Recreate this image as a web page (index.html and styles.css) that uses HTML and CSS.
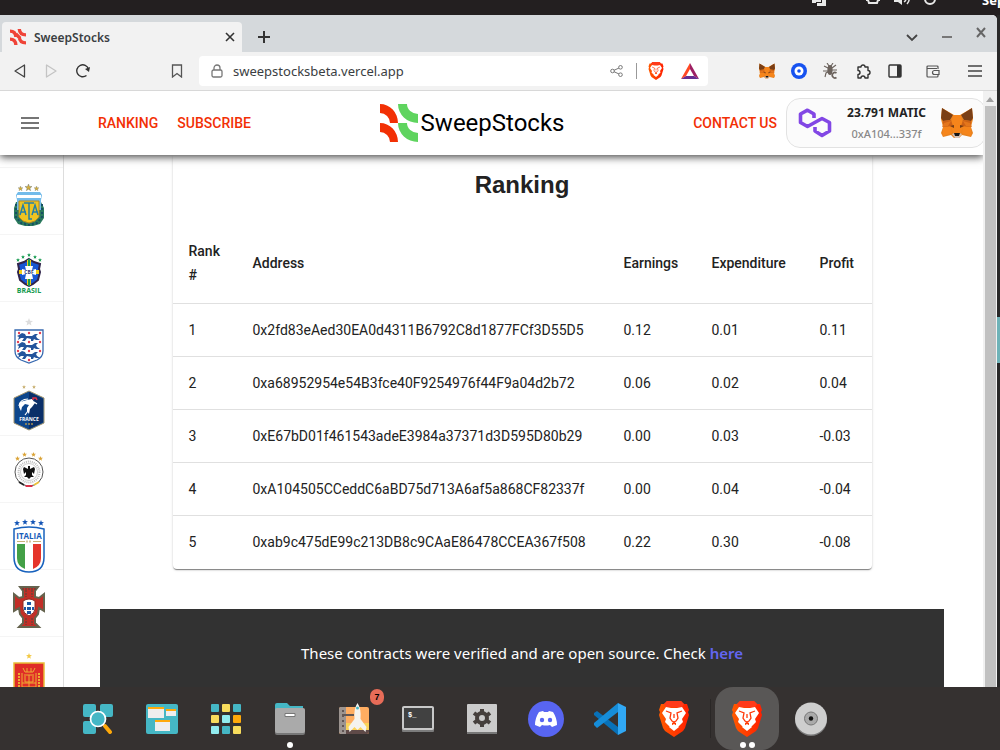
FILE: index.html
```
<!DOCTYPE html>
<html lang="en">

<head>
  <meta charset="UTF-8">
  <meta name="viewport" content="width=device-width, initial-scale=1.0">
  <title>SweepStocks</title>
  <link rel="stylesheet" href="styles.css">
</head>

<body>
  <!-- shared icons -->
  <svg class="defs" aria-hidden="true">
    <defs>
      <linearGradient id="brave-fill" x1="0" x2="1" y1="0" y2="0">
        <stop offset="0" stop-color="#ff5a00"/>
        <stop offset="1" stop-color="#ff1f00"/>
      </linearGradient>
      <symbol id="brave" viewBox="0 0 30 36">
        <path fill="url(#brave-fill)" d="M8 0h14l3 3h3l2 6-1 2 1 3-4 13-2 3-9 6-9-6-2-3L0 14l1-3-1-2 2-6h3z"/>
        <path fill="#ff3a1a" d="M8 0h14l3 3-2 3H7L5 3z"/>
        <path fill="#fff" d="M15 7l-3 0-5-1-4 6 4 6-1 3 5 5 2-1 0-3 2-1 2 1 0 3 2 1 5-5-1-3 4-6-4-6-5 1zM15 23l-5 3 5 4 5-4z"/>
        <path fill="none" stroke="#ff3a0a" stroke-width="1.3" d="M7 10l5 2-1 5 2 3 2 1 2-1 2-3-1-5 5-2M15 13v4M15 21v2"/>
      </symbol>
      <symbol id="fox" viewBox="0 0 32 30">
        <path fill="#e8821e" d="M1 0l12 7h6l12-7 1 11-2 8 2 6-2 4-9-2-3 3h-5l-3-3-8 2-2-4 2-6-2-8z"/>
        <path fill="#7a3f16" d="M1 0l11 7-3 5-7 1-2-3zM31 0L20 7l3 5 7 1 2-3z"/>
        <path fill="#f6851b" d="M12 7h8l2 11-2 7h-8l-2-7zM2 19l8-1 1 7-9 3zM30 19l-8-1-1 7 9 3z"/>
        <path fill="#cd6116" d="M2 13l8-1 2 6-10 1zM30 13l-8-1-2 6 10 1z"/>
        <path fill="#e4761b" d="M3 15l7-2-3 5-6 1zM29 15l-7-2 3 5 6 1z"/>
        <path fill="#763d16" d="M9 18l4-1 0 3zM23 18l-4-1 0 3z"/>
        <path fill="#d7c1b3" d="M11 26l3-1h4l3 1-3 4h-4z"/>
        <path fill="#161616" d="M13 25h6l-1 3h-4z"/>
      </symbol>
      <symbol id="star" viewBox="0 0 10 10">
        <path d="M5 0l1.3 3.4 3.7.2-2.9 2.3 1 3.6L5 7.5 1.9 9.5l1-3.6L0 3.6l3.7-.2z"/>
      </symbol>
      <symbol id="lion" viewBox="0 0 24 8">
        <path fill="#24549c" d="M2 2l3-2 3 1 1 2h6l3-2 3 0-2 2 1 2 3 2h-4l-2-1-1 2h-2v-2l-4-1-2 3H5l2-3-3 0-3 2 1-3-2-1z"/>
      </symbol>
    </defs>
  </svg>

  <div class="desktop">
    <div class="system-bar">
      <svg width="14" height="15" viewBox="0 0 14 15"><path fill="#e8e8e8" d="M0-2h9V2H4v1H0zM10-1h4v7H5V3h5z"/></svg>
      <svg class="tray-second" width="14" height="15" viewBox="0 0 14 15"><path fill="none" stroke="#e8e8e8" stroke-width="2" d="M0 0h2l1 3h8l1-3h2"/></svg>
      <svg width="16" height="15" viewBox="0 0 16 15"><path fill="#e8e8e8" d="M0-4h4l4-3V5L4 2H0z"/><path fill="none" stroke="#e8e8e8" stroke-width="1.5" d="M10 2q3-2 2-6M13 4q3-3 2-8"/></svg>
      <svg width="12" height="15" viewBox="0 0 12 15"><circle cx="6" cy="-1" r="5" fill="none" stroke="#e8e8e8" stroke-width="2"/></svg>
      <span class="clock">Sep</span>
    </div>

    <div class="workspace">
      <div class="browser">
        <div class="tab-strip">
          <div class="tab">
            <svg width="16" height="16" viewBox="0 0 38 38">
              <g fill="none" stroke="#ef4438" stroke-width="8">
                <path d="M0 5q13 0 14 14M0 24q13 0 14 14M22 0q1 14 16 14M22 19q1 14 16 14M14 12l10 10"/>
              </g>
            </svg>
            <span class="tab-title">SweepStocks</span>
            <button class="icon-button" aria-label="Close tab">
              <svg width="10" height="10" viewBox="0 0 10 10"><path stroke="#333" stroke-width="1.6" d="M1 1l8 8M9 1L1 9"/></svg>
            </button>
          </div>
          <button class="icon-button new-tab" aria-label="New tab">
            <svg width="12" height="12" viewBox="0 0 12 12"><path stroke="#333" stroke-width="2" d="M6 0v12M0 6h12"/></svg>
          </button>
          <div class="window-buttons">
            <button class="icon-button" aria-label="Search tabs">
              <svg width="12" height="12" viewBox="0 0 12 12"><path fill="none" stroke="#444" stroke-width="1.8" d="M1 4l5 5 5-5"/></svg>
            </button>
            <button class="icon-button" aria-label="Minimize">
              <svg width="10" height="12" viewBox="0 0 10 12"><path stroke="#777" stroke-width="2" d="M0 6h10"/></svg>
            </button>
            <button class="icon-button window-close" aria-label="Close window">
              <svg width="10" height="12" viewBox="0 0 10 12"><path stroke="#666" stroke-width="2" d="M1 1l8 9M9 1L1 10"/></svg>
            </button>
          </div>
        </div>

        <div class="toolbar">
          <div class="history-buttons">
            <button class="icon-button" aria-label="Back">
              <svg width="12" height="14" viewBox="0 0 12 14"><path fill="none" stroke="#444" stroke-width="1.3" stroke-linejoin="round" d="M10.500 1v12L1 7z"/></svg>
            </button>
            <button class="icon-button" aria-label="Forward" disabled>
              <svg width="12" height="14" viewBox="0 0 12 14"><path fill="none" stroke="#c4c4c4" stroke-width="1.3" stroke-linejoin="round" d="M1.500 1v12L11 7z"/></svg>
            </button>
            <button class="icon-button" aria-label="Reload">
              <svg width="14" height="14" viewBox="0 0 14 14"><path fill="none" stroke="#333" stroke-width="1.4" d="M10.500 11.500A6 6 0 1 1 12.500 5"/><path fill="#333" d="M9 5l5-2-1 5z"/></svg>
            </button>
          </div>
          <button class="icon-button bookmark" aria-label="Bookmark">
            <svg width="12" height="14" viewBox="0 0 12 14"><path fill="none" stroke="#555" stroke-width="1.3" d="M1.500 1h9v12L6 9.500 1.500 13z"/></svg>
          </button>
          <div class="address-bar">
            <svg width="12" height="14" viewBox="0 0 12 14"><g fill="none" stroke="#777" stroke-width="1.3"><rect x="1" y="6" width="10" height="7" rx="1.500"/><path d="M3 6V4a3 3 0 0 1 6 0v2"/></g></svg>
            <input class="address-input" type="text" aria-label="Address" value="sweepstocksbeta.vercel.app">
            <svg width="13" height="12" viewBox="0 0 13 12"><g fill="none" stroke="#777"><circle cx="2.500" cy="6" r="1.800"/><circle cx="10.500" cy="2.300" r="1.800"/><circle cx="10.500" cy="9.700" r="1.800"/><path d="M4 5.300l5-2.300M4 6.700l5 2.300"/></g></svg>
            <span class="divider"></span>
            <svg class="shield" width="16" height="18"><use href="#brave"/></svg>
            <svg width="18" height="16" viewBox="0 0 18 16">
              <path fill="#ff4724" d="M9 0L0 16l5-3 4-7z"/><path fill="#9e1f63" d="M9 0l9 16-5-3-4-7z"/><path fill="#662d91" d="M0 16h18l-5-3H5z"/>
            </svg>
          </div>
          <div class="extensions">
            <svg width="16" height="16"><use href="#fox"/></svg>
            <svg width="16" height="16" viewBox="0 0 16 16"><circle cx="8" cy="8" r="8" fill="#1652f0"/><circle cx="8" cy="8" r="4.500" fill="#fff"/><circle cx="8" cy="8" r="1.800" fill="#1652f0"/></svg>
            <svg width="16" height="16" viewBox="0 0 16 16"><ellipse cx="7" cy="7" rx="2.600" ry="5" fill="#6b625c"/><path fill="none" stroke="#6b625c" stroke-width="1.100" d="M4 0l2 3M10 0L8 3M1 3l4 2M13 2L9 5M0 8h5M9 7h5M2 14l1-4 2-1"/><path fill="none" stroke="#6b625c" stroke-width="1.700" d="M13.500 10a2.700 2.700 0 1 0 0 4.500"/></svg>
            <svg width="16" height="15" viewBox="0 0 16 15"><path fill="none" stroke="#333" stroke-width="1.400" stroke-linejoin="round" d="M3 3h3a2 2 0 0 1 4 0h3v3.500a2 2 0 0 1 0 4V14h-3a2 2 0 0 0-4 0H3v-3.500a2 2 0 0 0 0-4z"/></svg>
            <svg width="16" height="14" viewBox="0 0 16 14"><rect x="2" y="1" width="12" height="12" rx="1" fill="none" stroke="#333" stroke-width="1.400"/><path fill="#333" d="M10 1h4v12h-4z"/></svg>
          </div>
          <svg width="14" height="13" viewBox="0 0 14 13"><g fill="none" stroke="#555" stroke-width="1.200"><path d="M12 4V2q0-1-1-1H2Q1 1 1 2v9q0 1 1 1h9q1 0 1-1V9.500M1 3.500h10M13 5.500H8.500a1.500 1.500 0 0 0 0 4H13z"/></g></svg>
          <button class="icon-button browser-menu" aria-label="Browser menu">
            <svg width="14" height="12" viewBox="0 0 14 12"><path stroke="#444" stroke-width="1.400" d="M0 1h14M0 6h14M0 11h14"/></svg>
          </button>
        </div>

        <div class="viewport">
          <div class="page">
            <header class="app-bar">
              <button class="icon-button menu" aria-label="Open menu">
                <svg width="18" height="12" viewBox="0 0 18 12"><path fill="#757575" d="M0 0h18v2H0zM0 5h18v2H0zM0 10h18v2H0z"/></svg>
              </button>
              <nav class="nav-links">
                <a href="#ranking">Ranking</a>
                <a href="#subscribe">Subscribe</a>
              </nav>
              <a class="brand" href="#home">
                <svg width="38" height="38" viewBox="0 0 38 38">
                  <path fill="#f23005" d="M0 0a18 19 0 0 1 18 19H10A10 10 0 0 0 0 9zM0 19a18 19 0 0 1 18 19H10A10 10 0 0 0 0 28z"/>
                  <path fill="#5fd45f" d="M18 0h9a11 10 0 0 0 11 10v9A20 19 0 0 1 18 0zM18 19h9a11 10 0 0 0 11 10v9A20 19 0 0 1 18 19z"/>
                </svg>
                <span>SweepStocks</span>
              </a>
              <nav class="nav-links">
                <a href="#contact">Contact us</a>
              </nav>
              <div class="wallet">
                <svg width="34" height="30" viewBox="0 0 34 30">
                  <path fill="none" stroke="#8247e5" stroke-width="3.600" stroke-linejoin="round" d="M16 10V6L9.500 2.200 2.500 6v8.500l7 4L24 10.500l7.500 4V23L24 27.500 17 23v-4"/>
                </svg>
                <div class="wallet-info">
                  <strong>23.791 MATIC</strong>
                  <span>0xA104...337f</span>
                </div>
                <svg width="32" height="30"><use href="#fox"/></svg>
              </div>
            </header>

            <div class="page-body">
              <aside class="sidebar">
                <a class="team" href="#argentina" aria-label="Argentina">
                  <svg width="32" height="44" viewBox="0 0 32 44">
                    <g fill="#d3ad3c" stroke="#50626b" stroke-width=".5"><use href="#star" x="5" y="2" width="5" height="5"/><use href="#star" x="12" y="0" width="7" height="7"/><use href="#star" x="21" y="2" width="5" height="5"/></g>
                    <path fill="#2b7a5c" d="M3 18l-2 6 0 10 4 6 7 2h8l7-2 4-6V24l-3-6z"/>
                    <path fill="none" stroke="#174f63" stroke-dasharray="2 2" stroke-width="2" d="M3 20v13l5 6 8 2 8-2 5-6V20"/>
                    <path fill="#72bbea" d="M5 8l22 0 2 3-1 5v10H4V16l-1-5z"/><path fill="#fff" d="M4 11h24v3H4z"/>
                    <path fill="#efc420" stroke="#b18823" d="M6 17h20v16l-4 4-6 2-6-2-4-4z"/>
                    <path fill="none" stroke="#2480a5" stroke-width="1.500" d="M7 31l3-10 3 10M8 28h5M11 19h10M16 19v16h3M19 31l3-10 3 10M20 28h5"/>
                  </svg>
                </a>
                <a class="team" href="#brazil" aria-label="Brazil">
                  <svg width="32" height="44" viewBox="0 0 32 44">
                    <g fill="#169b50"><use href="#star" x="3" y="7" width="4" height="4"/><use href="#star" x="8" y="4" width="4" height="4"/><use href="#star" x="14" y="2" width="4" height="4"/><use href="#star" x="20" y="4" width="4" height="4"/><use href="#star" x="25" y="7" width="4" height="4"/></g>
                    <path fill="#1857d3" stroke="#30244b" stroke-width="2" d="M16 8l5 3 6 2-1 5 1 3-2 8-5 4-4 2-4-2-5-4-2-8 1-3-1-5 6-2z"/>
                    <path fill="#f2cf18" d="M14 9h4v25h-4zM6 19h20v4H6z"/><path fill="#169b50" d="M15 8h2v27h-2z"/>
                    <path fill="#fff" d="M12 15h8l-1 4 4-1v6l-4-1 1 5h-8l1-5-4 1v-6l4 1z"/>
                    <text x="16" y="23" class="crest-text" font-size="5" fill="#283576">CBF</text>
                    <text x="16" y="42" class="crest-text" font-size="7" fill="#169b50">BRASIL</text>
                  </svg>
                </a>
                <a class="team" href="#england" aria-label="England">
                  <svg width="32" height="46" viewBox="0 0 32 46">
                    <use href="#star" x="12" y="0" width="8" height="8" fill="#ddd"/>
                    <path fill="#fff" stroke="#3769b0" stroke-width="1.300" d="M2 12h28v21q0 6-6 9l-8 3-8-3q-6-3-6-9z"/>
                    <use href="#lion" x="4" y="15" width="24" height="8"/><use href="#lion" x="4" y="24" width="24" height="8"/><use href="#lion" x="4" y="33" width="24" height="8"/>
                    <g fill="#e63e50"><circle cx="6" cy="15" r="1.200"/><circle cx="16" cy="15" r="1.200"/><circle cx="27" cy="15" r="1.200"/><circle cx="5" cy="24" r="1.200"/><circle cx="16" cy="24" r="1.200"/><circle cx="27" cy="24" r="1.200"/><circle cx="5" cy="33" r="1.200"/><circle cx="16" cy="33" r="1.200"/><circle cx="27" cy="33" r="1.200"/><circle cx="16" cy="42" r="1.200"/></g>
                  </svg>
                </a>
                <a class="team" href="#france" aria-label="France">
                  <svg width="32" height="46" viewBox="0 0 32 46">
                    <g fill="#c9b071"><use href="#star" x="9" y="0" width="4" height="4"/><use href="#star" x="19" y="0" width="4" height="4"/></g>
                    <path fill="#0d468c" stroke="#a4946d" d="M16 6l15 7v25l-15 7-15-7V13z"/><path fill="#0b2f68" d="M16 7l14 7v23l-14 7z"/>
                    <path fill="#fff" d="M14 15l5-1 3 4-3 4-2 2-1 5-2-3 0-3 2-3-4-1-3 3-1 4-2-4 1-5z"/>
                    <path fill="none" stroke="#fff" stroke-width="1.200" d="M6 21q1-7 9-7M12 30l3-4M21 17l3 2"/>
                    <path fill="none" stroke="#dd3348" stroke-width="1.500" d="M20 15l0-2 3 0 1 2"/>
                    <text x="16" y="36" class="crest-text" font-size="5" fill="#fff">FRANCE</text>
                    <path stroke="#a99251" stroke-width="1.500" stroke-dasharray="2 1" d="M12 39h8"/>
                  </svg>
                </a>
                <a class="team" href="#germany" aria-label="Germany">
                  <svg width="32" height="36" viewBox="0 0 32 36">
                    <g fill="#dba437"><use href="#star" x="2" y="4" width="5" height="5"/><use href="#star" x="9" y="0" width="5" height="5"/><use href="#star" x="18" y="0" width="5" height="5"/><use href="#star" x="25" y="4" width="5" height="5"/></g>
                    <circle cx="16" cy="20" r="14" fill="#fff" stroke="#555"/>
                    <circle cx="16" cy="20" r="10.500" fill="none" stroke="#bbb" stroke-width="2" stroke-dasharray="1 1"/><circle cx="16" cy="20" r="8.500" fill="#fff" stroke="#999" stroke-width=".5"/>
                    <path fill="#111" d="M15 14h2v3l4-2 1 2-1 5-2-2 0 3 2 2-3 0-2 2-2-2-3 0 2-2 0-3-2 2-1-5 1-2 4 2z"/>
                    <path fill="none" stroke="#222" stroke-width="2" d="M6 30l5 3"/><path fill="none" stroke="#dc3048" stroke-width="2" d="M12.500 34h7"/><path fill="none" stroke="#edc33c" stroke-width="2" d="M21 33l5-3"/>
                  </svg>
                </a>
                <a class="team" href="#italy" aria-label="Italy">
                  <svg width="32" height="54" viewBox="0 0 32 54">
                    <g fill="#1455b5"><use href="#star" x="1" y="1" width="6" height="6"/><use href="#star" x="9" y="0" width="6" height="6"/><use href="#star" x="17" y="0" width="6" height="6"/><use href="#star" x="25" y="1" width="6" height="6"/></g>
                    <path fill="#fff" stroke="#1761bd" stroke-width="1.500" d="M1 10q15-4 30 0v28q0 15-15 15T1 38z"/>
                    <text x="16" y="20" class="crest-text" font-size="8" fill="#175dba">ITALIA</text>
                    <path stroke="#c8b179" d="M4 22.500h8M20 22.500h8"/><path stroke="#d8c79e" stroke-width="2" stroke-dasharray="2 1" d="M13 22.500h6"/>
                    <path fill="#43a047" d="M4 25h8v25q-8-3-8-11z"/><path fill="#e5352b" d="M20 25h8v14q0 8-8 11z"/>
                  </svg>
                </a>
                <a class="team" href="#portugal" aria-label="Portugal">
                  <svg width="32" height="42" viewBox="0 0 32 42">
                    <path fill="#c22e27" stroke="#65634e" stroke-width="2" d="M7 1h18l-3 4v6l4 1 5-4v17l-5-3-1 6-3 4v5l4 4H6l4-4v-5l-3-4-1-6-5 3V8l5 4 4-1V5z"/>
                    <path fill="none" stroke="#4c473a" stroke-dasharray="2 1" d="M9 3h14M13 4v7M19 4v7M13 32v7M19 32v7"/>
                    <path fill="#fff" stroke="#8c2a22" d="M10 15q6-4 12 0v8q0 4-6 7-6-3-6-7z"/>
                    <path fill="#1c59a5" d="M14 16h4v3h-4zM14 21h4v3h-4zM14 25h4v3h-4zM11 21h2v3h-2zM19 21h2v3h-2z"/>
                  </svg>
                </a>
                <a class="team" href="#spain" aria-label="Spain">
                  <svg width="32" height="54" viewBox="0 0 32 54">
                    <use href="#star" x="13" y="0" width="6" height="6" fill="#f3c944"/>
                    <path fill="#df2d28" stroke="#e9bd37" stroke-width="1.500" d="M1 10h30v30l-15 13L1 40z"/>
                    <g fill="none" stroke="#edad32"><path d="M10 15l2 4h8l2-4M14 15v4M18 15v4M11 22h10M12 23v6h8v-6M16 22v14M9 20v14h14V20M9 30h14"/><path stroke-dasharray="2 1" stroke-width="2" d="M6 20v20M26 20v20"/></g>
                  </svg>
                </a>
              </aside>

              <main class="content">
                <section class="card" id="ranking">
                  <h2>Ranking</h2>
                  <table class="ranking-table">
                    <thead>
                      <tr>
                        <th class="col-rank" scope="col">Rank #</th>
                        <th class="col-address" scope="col">Address</th>
                        <th class="col-earnings" scope="col">Earnings</th>
                        <th class="col-expenditure" scope="col">Expenditure</th>
                        <th class="col-profit" scope="col">Profit</th>
                      </tr>
                    </thead>
                    <tbody>
                      <tr>
                        <td>1</td>
                        <td>0x2fd83eAed30EA0d4311B6792C8d1877FCf3D55D5</td>
                        <td>0.12</td>
                        <td>0.01</td>
                        <td>0.11</td>
                      </tr>
                      <tr>
                        <td>2</td>
                        <td>0xa68952954e54B3fce40F9254976f44F9a04d2b72</td>
                        <td>0.06</td>
                        <td>0.02</td>
                        <td>0.04</td>
                      </tr>
                      <tr>
                        <td>3</td>
                        <td>0xE67bD01f461543adeE3984a37371d3D595D80b29</td>
                        <td>0.00</td>
                        <td>0.03</td>
                        <td>-0.03</td>
                      </tr>
                      <tr>
                        <td>4</td>
                        <td>0xA104505CCeddC6aBD75d713A6af5a868CF82337f</td>
                        <td>0.00</td>
                        <td>0.04</td>
                        <td>-0.04</td>
                      </tr>
                      <tr>
                        <td>5</td>
                        <td>0xab9c475dE99c213DB8c9CAaE86478CCEA367f508</td>
                        <td>0.22</td>
                        <td>0.30</td>
                        <td>-0.08</td>
                      </tr>
                    </tbody>
                  </table>
                </section>

                <footer class="footer">
                  <p>These contracts were verified and are open source. Check <a href="#contracts">here</a></p>
                  <p>Join us on <a href="#github">github</a> to add and build on our open source football games</p>
                </footer>
              </main>
            </div>
          </div>

          <div class="scrollbar">
            <svg width="8" height="5" viewBox="0 0 8 5"><path fill="#a0a0a0" d="M0 5l4-5 4 5z"/></svg>
            <div class="scroll-thumb"></div>
          </div>
        </div>
      </div>
      <div class="desktop-edge"><div class="edge-window"></div></div>
    </div>

    <div class="dock">
      <button class="dock-item" aria-label="Search">
        <svg width="30" height="30" viewBox="0 0 30 30"><g fill="#45b7c5"><rect width="13" height="13" rx="2"/><rect x="17" width="13" height="13" rx="2"/><rect y="17" width="13" height="13" rx="2"/></g><path stroke="#ffa90a" stroke-width="4" stroke-linecap="round" d="M22 22l5 6"/><circle cx="15" cy="15" r="7.500" fill="#45b7c5" stroke="#fff" stroke-width="1.700"/></svg>
      </button>
      <button class="dock-item" aria-label="Workspaces">
        <svg width="32" height="30" viewBox="0 0 32 30"><rect width="32" height="30" rx="2" fill="#45b7c5"/><path fill="#eee" d="M2 3h16v11H2zM20 5h10v7H20zM9 16h15v11H9z"/><path fill="#ffa90a" d="M2 3h16v2H2zM20 5h10v2H20zM9 16h15v2H9z"/></svg>
      </button>
      <button class="dock-item" aria-label="Applications">
        <svg width="30" height="30" viewBox="0 0 30 30"><g fill="#45b7c5"><rect width="8" height="8" rx="1"/><rect x="22" width="8" height="8" rx="1"/><rect x="11" y="22" width="8" height="8" rx="1"/></g><g fill="#f8dc5c"><rect x="11" width="8" height="8" rx="1"/><rect y="11" width="8" height="8" rx="1"/><rect x="22" y="22" width="8" height="8" rx="1"/></g><g fill="#91ecef"><rect x="11" y="11" width="8" height="8" rx="1"/><rect y="22" width="8" height="8" rx="1"/></g><rect x="22" y="11" width="8" height="8" rx="1" fill="#ffa90a"/></svg>
      </button>
      <button class="dock-item" aria-label="Files">
        <svg width="30" height="32" viewBox="0 0 30 32"><path fill="#45b7c5" d="M0 2q0-2 2-2h10l3 3h13v4H0z"/><rect y="6" width="30" height="26" rx="2" fill="#777"/><rect y="5" width="30" height="25" rx="2" fill="#aaa"/><path fill="#fff" stroke="#777" d="M10 10.500h10v3H10z"/></svg>
        <span class="running"><i></i></span>
      </button>
      <button class="dock-item" aria-label="Launcher">
        <svg width="30" height="32" viewBox="0 0 30 32"><rect y="4" width="30" height="27" rx="2" fill="#ffad61"/><path fill="#fbd35a" d="M7 20h23v7H7z"/><path fill="#5f4a48" d="M7 27h23v2q0 2-2 2H7z"/><path fill="#9c9490" d="M2 4h5v27H2q-2 0-2-2V6q0-2 2-2z"/><path stroke="#625755" stroke-width="2" d="M3 12h12"/><path stroke="#625755" stroke-width="2" stroke-dasharray="2 3" d="M4 7v22"/><path fill="#f5f3ef" d="M18.500 0q4 6 3 16l6 8-1 5-5-5-3 3-3-3-5 5-1-5 6-8q-1-10 3-16z"/><circle cx="18.500" cy="5" r="1.500" fill="#45b7c5"/></svg>
        <span class="badge">7</span>
      </button>
      <button class="dock-item" aria-label="Terminal">
        <svg width="32" height="26" viewBox="0 0 32 26"><rect y="1" width="32" height="25" rx="1" fill="#7c7c7c"/><rect x="1" y="1" width="30" height="22" rx="1" fill="#414141" stroke="#c8c8c8" stroke-width="2"/><text x="6" y="11" class="prompt" fill="#fff">$_</text></svg>
      </button>
      <button class="dock-item" aria-label="Settings">
        <svg width="30" height="30" viewBox="0 0 30 30"><rect width="30" height="29" rx="1" fill="#cbcbcb"/><path fill="#777" d="M0 28h30v2H0z"/><circle cx="15" cy="14" r="5" fill="none" stroke="#46403d" stroke-width="4"/><path stroke="#46403d" stroke-width="4" d="M15 5v4M15 19v4M7 9l4 3M19 16l4 3M7 19l4-3M19 12l4-3"/></svg>
      </button>
      <button class="dock-item" aria-label="Discord">
        <svg width="36" height="36" viewBox="0 0 36 36"><circle cx="18" cy="18" r="18" fill="#5865f2"/><path fill="#fff" d="M11 11l4-1 1 1h4l1-1 4 1q4 6 4 13l-5 2-2-2q-4 1-8 0l-2 2-5-2q0-7 4-13z"/><circle cx="14" cy="19" r="2.200" fill="#5865f2"/><circle cx="22" cy="19" r="2.200" fill="#5865f2"/></svg>
      </button>
      <button class="dock-item" aria-label="Code">
        <svg width="32" height="32" viewBox="0 0 32 32"><path fill="#0871b8" d="M0 10l3-2 21 16v8L0 12z"/><path fill="#168dd9" d="M0 22l3 3L24 9V0L0 20z"/><path fill="#31a8f4" d="M24 0l8 4v24l-8 4z"/></svg>
      </button>
      <button class="dock-item" aria-label="Brave">
        <svg width="30" height="36"><use href="#brave"/></svg>
      </button>
      <span class="dock-separator"></span>
      <button class="dock-item active" aria-label="Brave, running">
        <svg width="30" height="36"><use href="#brave"/></svg>
        <span class="running"><i></i><i></i></span>
      </button>
      <button class="dock-item" aria-label="Disc">
        <svg width="32" height="34" viewBox="0 0 32 34"><circle cx="16" cy="18" r="16" fill="#777"/><circle cx="16" cy="16.500" r="16" fill="#cecece"/><circle cx="16" cy="16.500" r="6.500" fill="#aaa" stroke="#777"/><circle cx="16" cy="16.500" r="2.200" fill="#111"/></svg>
      </button>
    </div>
  </div>
</body>

</html>
```

FILE: styles.css
```
* {
  box-sizing: border-box;
}

body {
  margin: 0;
  font-family: "Noto Sans", sans-serif;
  color: #222;
}

a {
  text-decoration: none;
}

svg {
  display: block;
  flex: none;
}

.defs {
  position: absolute;
  width: 0;
  height: 0;
}

.icon-button {
  display: flex;
  align-items: center;
  justify-content: center;
  padding: 0;
  border: none;
  background: none;
  cursor: pointer;
}

.desktop {
  display: flex;
  flex-direction: column;
  height: 100vh;
  overflow: hidden;
  background: #231f20;
}

/* System bar */
.system-bar {
  display: flex;
  flex: none;
  justify-content: flex-end;
  gap: 14px;
  height: 15px;
  overflow: hidden;
  color: #fff;
}

.tray-second {
  margin-left: 26px;
}

.clock {
  width: 18px;
  margin-left: 32px;
  font-size: 13px;
  font-weight: bold;
  line-height: 1px;
}

.workspace {
  display: flex;
  flex: 1;
  min-height: 0;
}

.desktop-edge {
  width: 3px;
  padding-top: 302px;
  background: #282828;
}

.edge-window {
  height: 46px;
  background: #6fb3b8;
}

/* Browser window */
.browser {
  display: flex;
  flex: 1;
  flex-direction: column;
  min-width: 0;
  background: #fff;
  border-top-right-radius: 5px;
  overflow: hidden;
}

.tab-strip {
  display: flex;
  flex: none;
  align-items: flex-end;
  height: 37px;
  padding-left: 2px;
  background: #d5d9dc;
}

.tab {
  display: flex;
  align-items: center;
  gap: 8px;
  width: 240px;
  height: 30px;
  padding: 0 7px 0 8px;
  background: #f2f2f2;
  border-radius: 4px 4px 0 0;
}

.tab-title {
  flex: 1;
  font-size: 12px;
  font-weight: 600;
  color: #3a3e42;
}

.new-tab {
  width: 44px;
  height: 30px;
}

.window-buttons {
  display: flex;
  gap: 24px;
  height: 30px;
  margin-left: auto;
  padding-right: 11px;
}

.window-close {
  padding-bottom: 8px;
}

.toolbar {
  display: flex;
  flex: none;
  align-items: center;
  height: 39px;
  padding: 0 15px 0 14px;
  background: #f2f2f2;
  border-bottom: 1px solid #d8d8d8;
}

.history-buttons {
  display: flex;
  gap: 19px;
}

.bookmark {
  margin: 0 16px 0 81px;
}

.address-bar {
  display: flex;
  flex: 1;
  align-items: center;
  height: 30px;
  padding: 0 9px 0 12px;
  background: #fff;
  border-radius: 4px;
}

.address-input {
  flex: 1;
  min-width: 0;
  padding: 0 10px;
  border: none;
  outline: none;
  font-family: inherit;
  font-size: 13px;
  color: #3a3e42;
}

.divider {
  width: 1px;
  height: 16px;
  margin: 0 11px 0 13px;
  background: #999;
}

.shield {
  margin-right: 17px;
}

.extensions {
  display: flex;
  align-items: center;
  gap: 16px;
  margin: 0 23px 0 51px;
}

.browser-menu {
  margin-left: 28px;
}

.viewport {
  display: flex;
  flex: 1;
  min-height: 0;
}

.page {
  display: flex;
  flex: 1;
  flex-direction: column;
  min-width: 0;
  overflow: hidden;
}

.scrollbar {
  display: flex;
  flex: none;
  flex-direction: column;
  align-items: center;
  gap: 4px;
  width: 14px;
  padding-top: 6px;
  background: #f1f1f1;
}

.scroll-thumb {
  flex: 1;
  width: 11px;
  background: #c1c1c1;
}

/* App bar */
.app-bar {
  position: relative;
  z-index: 1;
  display: flex;
  flex: none;
  align-items: center;
  height: 64px;
  padding-left: 21px;
  background: #fff;
  box-shadow: 0 2px 8px #444;
}

.nav-links {
  display: flex;
  gap: 19px;
}

.menu {
  margin-right: 59px;
}

.nav-links a {
  font-family: Roboto, sans-serif;
  font-size: 14px;
  font-weight: 500;
  text-transform: uppercase;
  color: #f23005;
}

.brand {
  display: flex;
  align-items: center;
  gap: 3px;
  margin: 0 auto;
  font-family: Roboto, sans-serif;
  font-size: 24px;
  color: #000;
}

.wallet {
  display: flex;
  flex: none;
  align-items: center;
  justify-content: space-between;
  width: 200px;
  height: 50px;
  margin: 0 -3px 0 9px;
  padding: 0 12px 0 11px;
  background: #fbfbfb;
  border: 1px solid #e2e2e2;
  border-radius: 14px;
}

.wallet-info {
  display: flex;
  flex-direction: column;
  text-align: center;
  line-height: 21px;
}

.wallet-info strong {
  font-size: 12px;
}

.wallet-info span {
  font-size: 11px;
  font-weight: 500;
  color: #888;
}

.page-body {
  display: flex;
  flex: 1;
  min-height: 0;
}

.sidebar {
  flex: none;
  width: 64px;
  padding-top: 12px;
  border-right: 1px solid #ddd;
}

.team {
  display: flex;
  justify-content: center;
  height: 67px;
  padding: 16px 5px 0 0;
  border-top: 1px solid #f5f5f5;
}

.crest-text {
  font-family: "Open Sans", sans-serif;
  font-weight: bold;
  text-anchor: middle;
}

.content {
  flex: 1;
  min-width: 0;
  padding: 0 39px 0 36px;
}

.card {
  max-width: 699px;
  margin: 0 auto;
  font-family: Roboto, sans-serif;
  background: #fff;
  border-radius: 0 0 4px 4px;
  box-shadow: 0 2px 1px -1px rgba(0, 0, 0, 0.3), 0 1px 1px rgba(0, 0, 0, 0.2), 0 1px 3px rgba(0, 0, 0, 0.15);
}

.card h2 {
  margin: 0;
  padding: 12px 0 20px;
  font-family: "Liberation Sans", sans-serif;
  font-size: 24px;
  line-height: 36px;
  text-align: center;
}

.ranking-table {
  width: 100%;
  table-layout: fixed;
  border-collapse: separate;
  border-spacing: 0;
  font-size: 14px;
  line-height: 20px;
  text-align: left;
}

.ranking-table th {
  padding: 16px;
  border-bottom: 1px solid #e0e0e0;
  font-weight: 500;
  line-height: 24px;
}

.ranking-table td {
  padding: 16px;
  border-bottom: 1px solid #e0e0e0;
}

.ranking-table tr:last-child td {
  border-bottom-color: transparent;
}

.ranking-table .col-rank {
  width: 64px;
}

.ranking-table .col-earnings {
  width: 88px;
}

.ranking-table .col-expenditure {
  width: 108px;
}

.ranking-table .col-profit {
  width: 68px;
}

.ranking-table thead th {
  white-space: normal;
}

.footer {
  height: 200px;
  margin-top: 40px;
  padding: 32px;
  background: #323232;
  color: #fff;
  font-size: 15px;
  line-height: 24px;
  text-align: center;
}

.footer p {
  margin: 0 0 16px;
}

.footer a {
  font-weight: 600;
  color: #6366f1;
}

/* Dock */
.dock {
  z-index: 2;
  display: flex;
  flex: none;
  height: 63px;
  padding-left: 66px;
  background: #353130;
}

.dock-item {
  position: relative;
  display: flex;
  align-items: center;
  justify-content: center;
  width: 64px;
  padding: 0;
  border: none;
  border-radius: 18px;
  background: none;
}

.dock-item.active {
  background: #595756;
}

.running {
  position: absolute;
  bottom: 2px;
  left: 0;
  display: flex;
  justify-content: center;
  gap: 3px;
  width: 100%;
}

.running i {
  width: 6px;
  height: 6px;
  border-radius: 50%;
  background: #fff;
}

.badge {
  position: absolute;
  top: 2px;
  right: 2px;
  width: 14px;
  height: 16px;
  border-radius: 8px;
  background: #e76c58;
  font-size: 9px;
  font-weight: bold;
  line-height: 16px;
}

.dock-separator {
  width: 1px;
  margin: 12px 4px;
  background: #2a2726;
}

.prompt {
  font: bold 7px "Liberation Mono", monospace;
}
```
